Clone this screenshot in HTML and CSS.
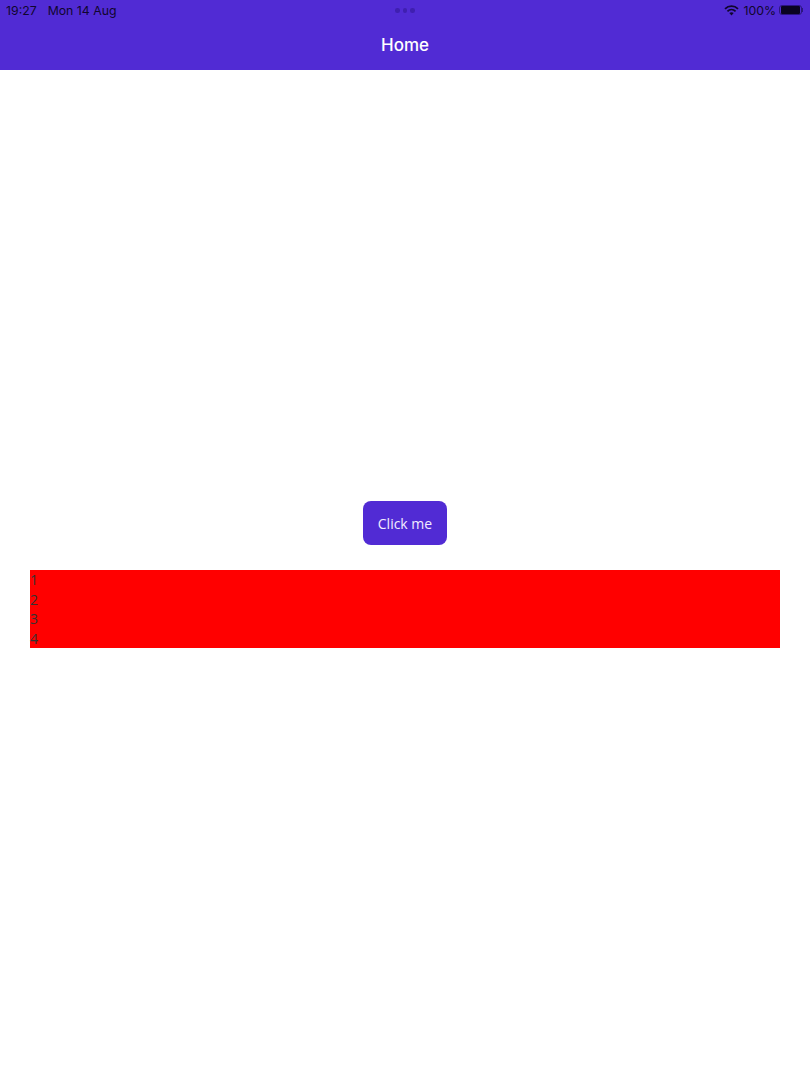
FILE: index.html
```html
<!DOCTYPE html>
<html lang="en">
<head>
  <meta charset="UTF-8">
  <meta name="viewport" content="width=device-width, initial-scale=1.0">
  <title>Home</title>
  <link rel="stylesheet" href="styles.css">
</head>
<body>

<header class="app-header">
  <div class="status-bar">
    <div class="status-left">
      <span>19:27</span>
      <span>Mon 14 Aug</span>
    </div>
    <div class="status-dots">
      <span></span><span></span><span></span>
    </div>
    <div class="status-right">
      <svg class="wifi" width="15" height="11" viewBox="0 0 15 11" aria-hidden="true">
        <path class="wifi-arc" d="M1 3.800C4.700.3 10.300.3 14 3.800"/>
        <path class="wifi-arc" d="M3.400 6.300C5.800 4.100 9.200 4.100 11.600 6.300"/>
        <path d="M5.300 8.100C6.600 7.100 8.400 7.100 9.700 8.100L7.500 10.600z"/>
      </svg>
      <span>100%</span>
      <div class="battery"><div class="battery-level"></div></div>
    </div>
  </div>
  <h1 class="app-title">Home</h1>
</header>

<main class="content">
  <a href="#" class="btn">Click me</a>
  <div class="number-list">
    <div>1</div>
    <div>2</div>
    <div>3</div>
    <div>4</div>
  </div>
</main>

</body>
</html>
```

FILE: styles.css
```css
body {
  margin: 0;
  padding: 0;
  background-color: #fff;
  font-family: "Open Sans", "Noto Sans", sans-serif;
  color: #333;
}

.app-header {
  background-color: #512bd4;
  height: 70px;
}

.status-bar {
  display: flex;
  justify-content: space-between;
  align-items: center;
  height: 20px;
  padding: 0 8px 0 6px;
  font-family: Inter, "Liberation Sans", sans-serif;
  font-size: 12.3px;
  color: #10062e;
  position: relative;
}

.status-left {
  display: flex;
  gap: 11px;
}

.status-right {
  display: flex;
  align-items: center;
  gap: 3px;
}

.wifi {
  fill: #10062e;
  margin-right: 1px;
}

.wifi-arc {
  fill: none;
  stroke: #10062e;
  stroke-width: 1.8;
}

.status-dots {
  position: absolute;
  left: 395px;
  top: 8px;
  display: flex;
  gap: 3px;
}

.status-dots span {
  width: 4.5px;
  height: 4.5px;
  border-radius: 50%;
  background-color: #3f1fb0;
}

.battery {
  position: relative;
  box-sizing: border-box;
  width: 23px;
  height: 10px;
  padding: 0 1px;
  border: 1px solid #2c1580;
  border-radius: 3px;
}

/* battery tip */
.battery::after {
  content: "";
  position: absolute;
  right: -2px;
  top: 2px;
  width: 1px;
  height: 4px;
  background-color: #2c1580;
}

.battery-level {
  height: 100%;
  background-color: #0a0320;
  border-radius: 1px;
}

.app-title {
  margin: 0;
  padding-top: 5px;
  text-align: center;
  font-family: Inter, "Liberation Sans", sans-serif;
  font-size: 17px;
  font-weight: 500;
  line-height: 40px;
  color: #fff;
}

.content {
  display: flex;
  flex-direction: column;
  align-items: center;
  padding: 431px 30px 0;
}

.btn {
  background-color: #512bd4;
  color: #f1edff;
  font-size: 14px;
  line-height: 45px;
  height: 44px;
  padding: 0 14.5px;
  border-radius: 8px;
  text-decoration: none;
}

.number-list {
  align-self: stretch;
  margin-top: 25px;
  background-color: #f00;
  font-size: 14px;
  line-height: 19.5px;
  color: #333;
}
```
